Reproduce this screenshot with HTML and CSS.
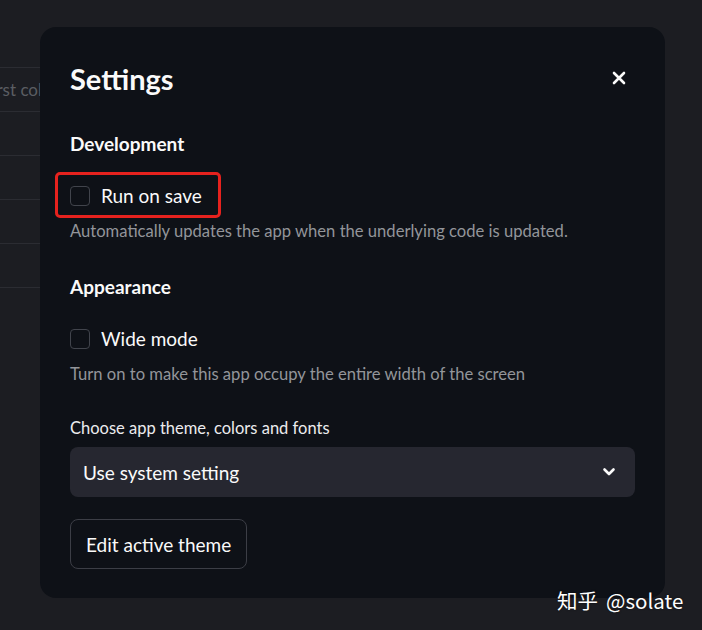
FILE: index.html
```html
<!DOCTYPE html>
<html lang="en">
<head>
<meta charset="utf-8">
<title>Settings</title>
<link rel="stylesheet" href="styles.css">
</head>
<body>
<div class="page">
  <div class="table">
    <div class="row"><span class="cell">rst col</span></div>
    <div class="row"></div>
    <div class="row"></div>
    <div class="row"></div>
    <div class="row"></div>
    <div class="row"></div>
  </div>
</div>

<div class="modal">
  <div class="header">
    <h1 class="title">Settings</h1>
    <button class="close" aria-label="Close">
      <svg width="14" height="14" viewBox="0 0 14 14"><path d="M2 2 L12 12 M12 2 L2 12" stroke="#fafafa" stroke-width="2.6" stroke-linecap="round"/></svg>
    </button>
  </div>

  <h2 class="section">Development</h2>
  <label class="check">
    <span class="box"></span>
    <span class="check-label">Run on save</span>
    <span class="highlight"></span>
  </label>
  <p class="desc">Automatically updates the app when the underlying code is updated.</p>

  <h2 class="section">Appearance</h2>
  <label class="check">
    <span class="box"></span>
    <span class="check-label">Wide mode</span>
  </label>
  <p class="desc">Turn on to make this app occupy the entire width of the screen</p>

  <div class="field-label">Choose app theme, colors and fonts</div>
  <div class="select">
    <span>Use system setting</span>
    <svg width="14" height="10" viewBox="0 0 14 10"><path d="M2.5 2.5 L7 7 L11.5 2.5" fill="none" stroke="#fafafa" stroke-width="2.6" stroke-linecap="round" stroke-linejoin="round"/></svg>
  </div>
  <button class="btn">Edit active theme</button>
</div>

<div class="watermark"><span>知乎</span><span>@solate</span></div>
</body>
</html>
```

FILE: styles.css
```css
* { box-sizing: border-box; }
html, body { margin: 0; padding: 0; }
body {
  width: 702px;
  height: 630px;
  overflow: hidden;
  background: #1c1d22;
  font-family: Lato, "Noto Sans", sans-serif;
  color: #fafafa;
  position: relative;
}
.page { padding-top: 67px; }
.table { width: 40px; overflow: hidden; }
.row {
  height: 44px;
  border-top: 1px solid #2b2c32;
  display: flex;
  align-items: center;
  justify-content: flex-end;
}
.cell {
  font-size: 17px;
  color: #5b5d63;
  white-space: nowrap;
  margin-right: -2px;
}

.modal {
  position: absolute;
  left: 40px;
  top: 27px;
  width: 625px;
  height: 571px;
  background: #0e1117;
  border-radius: 16px;
  padding: 32px 30px 0 30px;
  display: flex;
  flex-direction: column;
  align-items: flex-start;
}
.header {
  width: 100%;
  height: 40px;
  display: flex;
  justify-content: space-between;
  align-items: center;
}
.title {
  margin: 0;
  font-size: 29px;
  font-weight: 700;
  line-height: 40px;
}
.close {
  width: 32px;
  height: 32px;
  border: 0;
  background: none;
  padding: 0;
  display: flex;
  align-items: center;
  justify-content: center;
  margin-top: -2px;
}
.section {
  margin: 33px 0 0 0;
  font-size: 19px;
  font-weight: 700;
  line-height: 24px;
}
.check {
  margin-top: 26px;
  height: 28px;
  display: flex;
  align-items: center;
  gap: 11px;
  position: relative;
}
.box {
  width: 20px;
  height: 20px;
  border: 1px solid #41444c;
  border-radius: 4px;
  background: #0e1117;
}
.check-label {
  font-size: 19px;
  line-height: 28px;
}
.highlight {
  position: absolute;
  left: -15px;
  top: -10px;
  width: 166px;
  height: 46px;
  border: 3px solid #e6221e;
  border-radius: 5px;
}
.desc {
  margin: 10px 0 0 0;
  font-size: 16.6px;
  line-height: 22px;
  color: #93959a;
}
.field-label {
  margin-top: 32px;
  font-size: 16.5px;
  line-height: 22px;
  color: #ececee;
}
.select {
  margin-top: 8px;
  width: 100%;
  height: 50px;
  background: #262730;
  border-radius: 8px;
  display: flex;
  align-items: center;
  justify-content: space-between;
  padding: 0 19px 0 13px;
  font-size: 19px;
}
.btn {
  margin-top: 22px;
  height: 50px;
  padding: 0 15px;
  background: #0e1117;
  border: 1px solid #3c3e46;
  border-radius: 8px;
  color: #fafafa;
  font-family: inherit;
  font-size: 19px;
}
.watermark {
  position: absolute;
  left: 557px;
  top: 586px;
  display: flex;
  gap: 8px;
  font-family: "Noto Sans CJK SC", sans-serif;
  font-size: 20.5px;
  line-height: 28px;
  color: #ffffff;
  text-shadow: 0 0 2px rgba(0,0,0,0.6);
  white-space: nowrap;
}
```
